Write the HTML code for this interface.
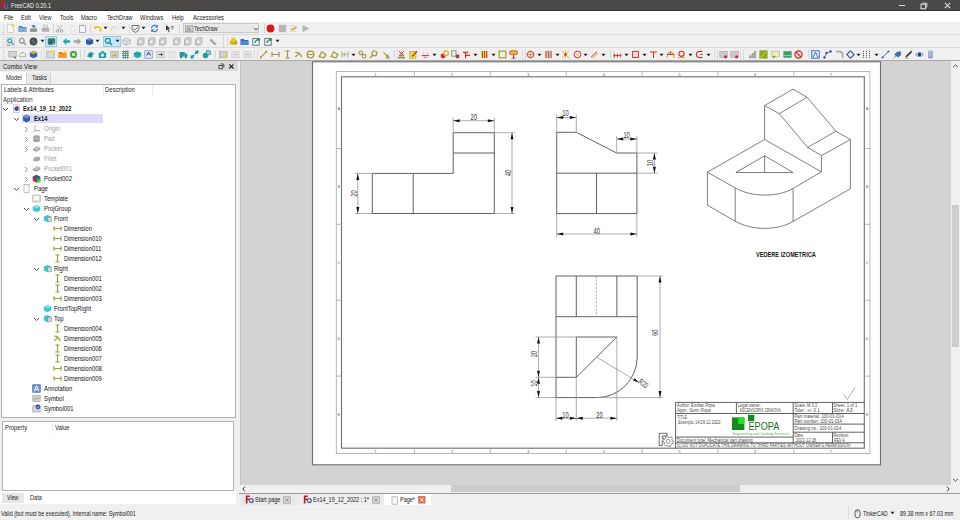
<!DOCTYPE html>
<html><head><meta charset="utf-8"><style>
*{box-sizing:border-box;margin:0;padding:0}
html,body{width:960px;height:520px;overflow:hidden;background:#f0f0f0;font-family:"Liberation Sans",sans-serif;color:#000}
.a{position:absolute}
.t{position:absolute;white-space:nowrap;transform-origin:0 50%}
svg{position:absolute;overflow:visible}
</style></head><body>
<div class="a" style="left:0px;top:0px;width:960px;height:11px;background:#4a4948;"></div>
<div class="a" style="left:0px;top:10px;width:960px;height:0.8px;background:#333232;"></div>
<svg style="left:0;top:0" width="12" height="11" viewBox="0 0 12 11"><path d="M1.3 1.5h4.5v1.6H3.1v1.4h2v1.5h-2v3.2H1.3z" fill="#d01818"/><circle cx="6.1" cy="6.6" r="1.8" fill="#2a3a6a" stroke="#4a70c0" stroke-width="1.1"/></svg>
<div class="t" style="left:11.4px;top:1.56px;font-size:7.4px;line-height:8.88px;color:#f0f0f0;font-weight:400;transform:scaleX(0.75);">FreeCAD 0.20.1</div>
<div class="a" style="left:899px;top:5px;width:6px;height:1px;background:#d8d8d8;"></div>
<svg style="left:920;top:2" width="8" height="8" viewBox="0 0 8 8"><rect x="1" y="2.2" width="4.6" height="4.6" fill="none" stroke="#d8d8d8" stroke-width="1.1"/><path d="M2.4 1.2h4.4v4.4" fill="none" stroke="#d8d8d8" stroke-width="1"/></svg>
<svg style="left:944;top:2" width="7" height="7" viewBox="0 0 7 7"><path d="M0.8 0.8l5.4 5.4M6.2 0.8L0.8 6.2" stroke="#e0e0e0" stroke-width="1.1"/></svg>
<div class="a" style="left:0px;top:11px;width:960px;height:11px;background:#ffffff;"></div>
<div class="t" style="left:4px;top:13.50px;font-size:7px;line-height:8.40px;color:#1a1a1a;font-weight:400;transform:scaleX(0.82);">File</div>
<div class="t" style="left:21px;top:13.50px;font-size:7px;line-height:8.40px;color:#1a1a1a;font-weight:400;transform:scaleX(0.82);">Edit</div>
<div class="t" style="left:39px;top:13.50px;font-size:7px;line-height:8.40px;color:#1a1a1a;font-weight:400;transform:scaleX(0.82);">View</div>
<div class="t" style="left:60px;top:13.50px;font-size:7px;line-height:8.40px;color:#1a1a1a;font-weight:400;transform:scaleX(0.82);">Tools</div>
<div class="t" style="left:81px;top:13.50px;font-size:7px;line-height:8.40px;color:#1a1a1a;font-weight:400;transform:scaleX(0.82);">Macro</div>
<div class="t" style="left:106.6px;top:13.50px;font-size:7px;line-height:8.40px;color:#1a1a1a;font-weight:400;transform:scaleX(0.82);">TechDraw</div>
<div class="t" style="left:140px;top:13.50px;font-size:7px;line-height:8.40px;color:#1a1a1a;font-weight:400;transform:scaleX(0.82);">Windows</div>
<div class="t" style="left:172.2px;top:13.50px;font-size:7px;line-height:8.40px;color:#1a1a1a;font-weight:400;transform:scaleX(0.82);">Help</div>
<div class="t" style="left:192.6px;top:13.50px;font-size:7px;line-height:8.40px;color:#1a1a1a;font-weight:400;transform:scaleX(0.82);">Accessories</div>
<div class="a" style="left:0px;top:22px;width:960px;height:39px;background:#f0f0f0;"></div>
<div class="a" style="left:0px;top:34px;width:960px;height:1px;background:#dcdcdc;"></div>
<div class="a" style="left:0px;top:47px;width:960px;height:1px;background:#dcdcdc;"></div>
<div class="a" style="left:0px;top:60px;width:960px;height:1px;background:#a9a9a9;"></div>
<div class="a" style="left:0px;top:61px;width:238px;height:444px;background:#f0f0f0;"></div>
<div class="a" style="left:0px;top:61px;width:238px;height:10px;background:#dadada;"></div>
<div class="t" style="left:2.5px;top:63.00px;font-size:7px;line-height:8.40px;color:#222;font-weight:400;transform:scaleX(0.86);">Combo View</div>
<svg style="left:217;top:62" width="20" height="9" viewBox="0 0 20 9"><rect x="2" y="3.4" width="3.4" height="3.4" fill="none" stroke="#333" stroke-width="0.8"/><path d="M3.4 2h3.4v3.4" fill="none" stroke="#333" stroke-width="0.8"/><path d="M12.3 2.3l4.2 4.2M16.5 2.3l-4.2 4.2" stroke="#222" stroke-width="1.1"/></svg>
<div class="a" style="left:0px;top:72px;width:26px;height:12px;background:#ffffff;"></div>
<div class="a" style="left:26px;top:73px;width:24px;height:11px;background:#eaeaea;"></div>
<div class="a" style="left:25.5px;top:73px;width:0.6px;height:11px;background:#d0d0d0;"></div>
<div class="a" style="left:49.5px;top:73px;width:0.6px;height:11px;background:#d0d0d0;"></div>
<div class="t" style="left:5.5px;top:73.72px;font-size:6.8px;line-height:8.16px;color:#222;font-weight:400;transform:scaleX(0.86);">Model</div>
<div class="t" style="left:32px;top:74.12px;font-size:6.8px;line-height:8.16px;color:#222;font-weight:400;transform:scaleX(0.86);">Tasks</div>
<div class="a" style="left:1px;top:83.5px;width:235px;height:334px;background:#ffffff;border:1px solid #b4b4b4"></div>
<div class="a" style="left:103px;top:85px;width:0.7px;height:10px;background:#ececec;"></div>
<div class="a" style="left:152px;top:85px;width:0.7px;height:10px;background:#ececec;"></div>
<div class="t" style="left:3.5px;top:85.70px;font-size:6.5px;line-height:7.80px;color:#222;font-weight:400;transform:scaleX(0.92);">Labels &amp; Attributes</div>
<div class="t" style="left:105px;top:85.70px;font-size:6.5px;line-height:7.80px;color:#222;font-weight:400;transform:scaleX(0.92);">Description</div>
<div class="a" style="left:2px;top:421px;width:232px;height:70px;background:#ffffff;border:1px solid #b4b4b4"></div>
<div class="a" style="left:52px;top:423px;width:0.7px;height:10px;background:#ececec;"></div>
<div class="t" style="left:4.6px;top:423.80px;font-size:6.5px;line-height:7.80px;color:#222;font-weight:400;transform:scaleX(0.9);">Property</div>
<div class="t" style="left:55px;top:423.80px;font-size:6.5px;line-height:7.80px;color:#222;font-weight:400;transform:scaleX(0.9);">Value</div>
<div class="a" style="left:0px;top:491px;width:236px;height:13px;background:#ffffff;"></div>
<div class="a" style="left:2px;top:492.8px;width:21.5px;height:10.4px;background:#e6e6e6;"></div>
<div class="t" style="left:6.9px;top:494.30px;font-size:6.5px;line-height:7.80px;color:#222;font-weight:400;transform:scaleX(0.82);">View</div>
<div class="t" style="left:29.5px;top:494.30px;font-size:6.5px;line-height:7.80px;color:#222;font-weight:400;transform:scaleX(0.86);">Data</div>
<div class="a" style="left:239px;top:61px;width:721px;height:432px;background:#f0f0f0;"></div>
<div class="a" style="left:239.5px;top:61px;width:711.5px;height:424px;background:#d3d3d3;"></div>
<div class="a" style="left:239.5px;top:61px;width:1px;height:424px;background:#c4c4c4;"></div>
<div class="a" style="left:951px;top:61px;width:9px;height:424px;background:#f0f0f0;"></div>
<div class="a" style="left:951.8px;top:204.7px;width:7px;height:142.2px;background:#cdcdcd;"></div>
<svg style="left:951;top:63" width="9" height="6" viewBox="0 0 9 6"><path d="M2 4.2l2.5-2.4 2.5 2.4" fill="none" stroke="#555" stroke-width="1"/></svg>
<svg style="left:951;top:477" width="9" height="6" viewBox="0 0 9 6"><path d="M2 1.8l2.5 2.4 2.5-2.4" fill="none" stroke="#555" stroke-width="1"/></svg>
<div class="a" style="left:239.5px;top:485px;width:711.5px;height:8px;background:#f0f0f0;"></div>
<div class="a" style="left:450.6px;top:484.8px;width:289.8px;height:7.4px;background:#cdcdcd;"></div>
<svg style="left:241;top:485" width="6" height="8" viewBox="0 0 6 8"><path d="M4 1.6l-2.2 2.4 2.2 2.4" fill="none" stroke="#333" stroke-width="1"/></svg>
<svg style="left:945;top:485" width="6" height="8" viewBox="0 0 6 8"><path d="M2 1.6l2.2 2.4-2.2 2.4" fill="none" stroke="#333" stroke-width="1"/></svg>
<div class="a" style="left:239px;top:492.8px;width:721px;height:0.8px;background:#9a9a9a;"></div>
<div class="a" style="left:240.7px;top:493.5px;width:55.3px;height:11px;background:#e8e8e8;"></div>
<div class="a" style="left:296px;top:493.5px;width:88px;height:11px;background:#ececec;"></div>
<div class="a" style="left:384px;top:493.5px;width:47px;height:11.5px;background:#ffffff;"></div>
<svg style="left:244.5px;top:495px" width="10" height="9" viewBox="0 0 10 9"><path d="M0.8 0.6h4v1.5H2.5v1.4h1.9v1.4H2.5v3.5H0.8z" fill="#c81a1a"/><circle cx="6.3" cy="5.6" r="2" fill="none" stroke="#3c64b4" stroke-width="1.2"/></svg>
<div class="t" style="left:255px;top:496.16px;font-size:6.4px;line-height:7.68px;color:#222;font-weight:400;transform:scaleX(0.86);">Start page</div>
<svg style="left:283;top:496" width="8" height="8" viewBox="0 0 8 8"><rect x="0.7" y="0.7" width="6.6" height="6.6" fill="#d6d6d6" stroke="#a8a8a8" stroke-width="0.8"/><path d="M2.4 2.4l3.2 3.2M5.6 2.4l-3.2 3.2" stroke="#888" stroke-width="0.8"/></svg>
<svg style="left:302.5px;top:495px" width="10" height="9" viewBox="0 0 10 9"><path d="M0.8 0.6h4v1.5H2.5v1.4h1.9v1.4H2.5v3.5H0.8z" fill="#c81a1a"/><circle cx="6.3" cy="5.6" r="2" fill="none" stroke="#3c64b4" stroke-width="1.2"/></svg>
<div class="t" style="left:312.6px;top:496.16px;font-size:6.4px;line-height:7.68px;color:#222;font-weight:400;transform:scaleX(0.86);">Ex14_19_12_2022 : 1*</div>
<svg style="left:371.5;top:496" width="8" height="8" viewBox="0 0 8 8"><rect x="0.7" y="0.7" width="6.6" height="6.6" fill="#d6d6d6" stroke="#a8a8a8" stroke-width="0.8"/><path d="M2.4 2.4l3.2 3.2M5.6 2.4l-3.2 3.2" stroke="#888" stroke-width="0.8"/></svg>
<svg style="left:391;top:495.5" width="8" height="9" viewBox="0 0 8 9"><rect x="1" y="0.8" width="5.5" height="7.4" fill="#f8f8f8" stroke="#b0b0b0" stroke-width="0.8"/></svg>
<div class="t" style="left:400px;top:496.36px;font-size:6.4px;line-height:7.68px;color:#222;font-weight:400;transform:scaleX(0.86);">Page*</div>
<svg style="left:418;top:496" width="8" height="8" viewBox="0 0 8 8"><rect x="0.5" y="0.5" width="6.6" height="6.6" fill="#e27458" stroke="#c85a3a" stroke-width="0.6"/><path d="M2.2 2.2l3.2 3.2M5.4 2.2l-3.2 3.2" stroke="#fff" stroke-width="0.9"/></svg>
<div class="a" style="left:0px;top:504.5px;width:960px;height:15.5px;background:#f0f0f0;"></div>
<div class="t" style="left:1px;top:509.62px;font-size:6.3px;line-height:7.56px;color:#222;font-weight:400;transform:scaleX(0.86);">Valid (but must be executed), Internal name: Symbol001</div>
<div class="a" style="left:847.5px;top:506px;width:0.6px;height:13px;background:#dcdcdc;"></div>
<svg style="left:854;top:508.5" width="7" height="10" viewBox="0 0 7 10"><rect x="1" y="0.8" width="5" height="8" rx="2.4" fill="none" stroke="#444" stroke-width="0.9"/><path d="M3 1v2.4" stroke="#444" stroke-width="0.7"/></svg>
<div class="t" style="left:862.6px;top:509.56px;font-size:6.4px;line-height:7.68px;color:#222;font-weight:400;transform:scaleX(0.8);">TinkerCAD</div>
<svg style="left:889.5;top:511" width="5" height="4" viewBox="0 0 5 4"><path d="M0.5 0.8h4l-2 2.4z" fill="#222"/></svg>
<div class="t" style="left:899.7px;top:509.56px;font-size:6.4px;line-height:7.68px;color:#222;font-weight:400;transform:scaleX(0.84);">89.38 mm x 67.03 mm</div>
<div class="a" style="left:2.5px;top:24px;width:1px;height:9px;background:repeating-linear-gradient(#c4c4c4 0 1px,transparent 1px 2px)"></div><svg style="left:6.30px;top:23.90px" width="9" height="9" viewBox="0 0 9 9"><rect x="1.2" y="0.8" width="6.4" height="7.6" fill="#f6f6f6" stroke="#bbb" stroke-width="0.6"/><circle cx="7" cy="1.6" r="1.6" fill="#f5e030"/></svg><svg style="left:17.50px;top:23.90px" width="9" height="9" viewBox="0 0 9 9"><path d="M0.6 2h3l1 1h3.8v5H0.6z" fill="#4f88c8"/><path d="M0.6 4h7.8v4H0.6z" fill="#7aaee0"/></svg><svg style="left:29.20px;top:23.90px" width="9" height="9" viewBox="0 0 9 9"><path d="M1 5h7v3H1z" fill="#999"/><path d="M2.5 1h3l1.6 2.4H4.6V5" fill="#4f88c8"/><path d="M1 5h7" stroke="#666" stroke-width="0.6"/></svg><svg style="left:40.50px;top:23.90px" width="9" height="9" viewBox="0 0 9 9"><rect x="0.8" y="4" width="7.4" height="3.8" fill="#b4b4b4"/><rect x="2.4" y="1" width="4.2" height="3" fill="#e6e6e6" stroke="#aaa" stroke-width="0.5"/></svg><div class="a" style="left:52.5px;top:24px;width:0.8px;height:9px;background:#d8d8d8"></div><svg style="left:55.00px;top:23.90px" width="9" height="9" viewBox="0 0 9 9"><path d="M2 1l4 5M7 1L3 6" stroke="#aaa" stroke-width="0.8"/><circle cx="2.4" cy="7" r="1.3" fill="none" stroke="#888" stroke-width="0.7"/><circle cx="6.6" cy="7" r="1.3" fill="none" stroke="#888" stroke-width="0.7"/></svg><svg style="left:67.50px;top:23.90px" width="9" height="9" viewBox="0 0 9 9"><rect x="3" y="2" width="4" height="6" fill="none" stroke="#ddd" stroke-width="0.6"/></svg><svg style="left:78.00px;top:23.90px" width="9" height="9" viewBox="0 0 9 9"><rect x="1.5" y="1.4" width="6" height="7" fill="#f6f6f6" stroke="#9a9a9a" stroke-width="0.7"/><rect x="3" y="0.6" width="3" height="1.6" fill="#bbb"/></svg><div class="a" style="left:89.5px;top:24px;width:0.8px;height:9px;background:#d8d8d8"></div><svg style="left:92.50px;top:23.90px" width="9" height="9" viewBox="0 0 9 9"><path d="M2 4.5Q4.5 1.5 7.5 4.2V7.5" fill="none" stroke="#e8c020" stroke-width="1.8"/><path d="M0.8 2.5L3.6 2.4L2.2 5.6z" fill="#e8c020"/></svg><svg style="left:103.00px;top:26.40px" width="5" height="4" viewBox="0 0 5 4"><path d="M0.5 0.8h4L2.5 3.2z" fill="#222"/></svg><svg style="left:109.50px;top:23.90px" width="9" height="9" viewBox="0 0 9 9"><path d="M7 4.5Q4.5 1.5 1.5 4.2V7.5" fill="none" stroke="#ddd" stroke-width="1.6"/></svg><svg style="left:120.50px;top:26.40px" width="5" height="4" viewBox="0 0 5 4"><path d="M0.5 0.8h4L2.5 3.2z" fill="#222"/></svg><div class="a" style="left:128.5px;top:24px;width:0.8px;height:9px;background:#d8d8d8"></div><svg style="left:130.50px;top:23.90px" width="9" height="9" viewBox="0 0 9 9"><path d="M1 1.5h7v3Q8 7.5 4.5 8.4Q1 7.5 1 4.5z" fill="#eee" stroke="#555" stroke-width="0.8"/><path d="M2.8 4.6l1.4 1.3 2.4-2.6" stroke="#555" stroke-width="0.8" fill="none"/></svg><svg style="left:141.00px;top:26.40px" width="5" height="4" viewBox="0 0 5 4"><path d="M0.5 0.8h4L2.5 3.2z" fill="#222"/></svg><svg style="left:150.00px;top:23.90px" width="9" height="9" viewBox="0 0 9 9"><path d="M1.5 4.2A3.1 3.1 0 0 1 7.2 2.8M7.5 4.8A3.1 3.1 0 0 1 1.8 6.2" fill="none" stroke="#3478d0" stroke-width="1.3"/><path d="M7.8 0.8V3.6H5z M1.2 8.2V5.4H4z" fill="#3478d0"/></svg><svg style="left:165.00px;top:23.90px" width="9" height="9" viewBox="0 0 9 9"><path d="M1 1L5 4.6L3.4 5L4.6 8L3.8 8.3L2.6 5.4L1 6.6z" fill="#333"/><text x="7" y="5.6" font-size="6" font-weight="700" text-anchor="middle" fill="#555" font-family="Liberation Sans">?</text></svg><div class="a" style="left:178.5px;top:24px;width:1px;height:9px;background:repeating-linear-gradient(#c4c4c4 0 1px,transparent 1px 2px)"></div><div class="a" style="left:182.5px;top:23.3px;width:76.7px;height:10.2px;background:#e8e8e8;border:0.8px solid #c8c8c8"></div><svg style="left:184.50px;top:24.60px" width="9" height="8" viewBox="0 0 9 8"><rect x="0.6" y="0.8" width="7.4" height="6" fill="#cfcfcf" stroke="#888" stroke-width="0.6"/><path d="M2 5h4M2 3h3" stroke="#555" stroke-width="0.6"/></svg><div class="t" style="left:193.7px;top:25.2px;font-size:7px;line-height:8.4px;color:#222;transform:scaleX(0.76);transform-origin:0 50%">TechDraw</div><svg style="left:253.00px;top:26.50px" width="6" height="4" viewBox="0 0 6 4"><path d="M0.8 0.8l2.2 2.2 2.2-2.2" fill="none" stroke="#444" stroke-width="0.9"/></svg><div class="a" style="left:263.5px;top:24px;width:1px;height:9px;background:repeating-linear-gradient(#c4c4c4 0 1px,transparent 1px 2px)"></div><svg style="left:265.80px;top:23.90px" width="9" height="9" viewBox="0 0 9 9"><circle cx="4.5" cy="4.5" r="3.9" fill="#d81818"/></svg><svg style="left:277.50px;top:23.90px" width="9" height="9" viewBox="0 0 9 9"><rect x="0.8" y="0.8" width="7.4" height="7.4" fill="#b6b6b6"/></svg><svg style="left:289.00px;top:23.90px" width="9" height="9" viewBox="0 0 9 9"><path d="M1 2h6.5M1 4.5h6.5M1 7h6.5" stroke="#d8c890" stroke-width="0.8"/><path d="M2.4 6.2L7.6 3" stroke="#b08030" stroke-width="1"/></svg><svg style="left:300.50px;top:23.90px" width="9" height="9" viewBox="0 0 9 9"><path d="M1.5 0.8L8.3 4.5L1.5 8.2z" fill="#b6b6b6"/></svg><div class="a" style="left:2.5px;top:37px;width:1px;height:9px;background:repeating-linear-gradient(#c4c4c4 0 1px,transparent 1px 2px)"></div><svg style="left:6.30px;top:36.80px" width="9" height="9" viewBox="0 0 9 9"><rect x="0.8" y="0.8" width="7.4" height="7.4" fill="#f2f2f2" stroke="#aaa" stroke-width="0.5"/><circle cx="3.8" cy="3.8" r="2" fill="none" stroke="#1aa0a8" stroke-width="1.2"/><path d="M5.2 5.2L7.6 7.6" stroke="#1aa0a8" stroke-width="1.3"/><path d="M0.8 8.2H4" stroke="#c04040" stroke-width="0.7"/></svg><svg style="left:17.50px;top:36.80px" width="9" height="9" viewBox="0 0 9 9"><circle cx="3.8" cy="3.8" r="2.4" fill="none" stroke="#999" stroke-width="1.3"/><path d="M5.4 5.4L8 8" stroke="#999" stroke-width="1.5"/></svg><svg style="left:29.00px;top:36.80px" width="9" height="9" viewBox="0 0 9 9"><circle cx="4.5" cy="4.5" r="3.9" fill="#2a5a5a"/><circle cx="4.5" cy="4.5" r="1.9" fill="none" stroke="#d03030" stroke-width="0.9"/><path d="M2.5 2.5l4 4" stroke="#30c0c0" stroke-width="0.8"/></svg><svg style="left:39.50px;top:39.30px" width="5" height="4" viewBox="0 0 5 4"><path d="M0.5 0.8h4L2.5 3.2z" fill="#222"/></svg><div class="a" style="left:45px;top:35.6px;width:12.2px;height:11.2px;background:#cce4f7;border:0.8px solid #99c8f0"></div><svg style="left:46.50px;top:36.80px" width="9" height="9" viewBox="0 0 9 9"><rect x="0.8" y="1.2" width="7.4" height="6.6" rx="1.2" fill="#2e8a4a"/><circle cx="4" cy="5.2" r="2" fill="#2c50b0"/><path d="M5.8 6.2l2 1.6" stroke="#fff" stroke-width="1"/></svg><svg style="left:61.50px;top:36.80px" width="9" height="9" viewBox="0 0 9 9"><path d="M0.8 4.5L4.4 1v2.2H8.2v2.6H4.4V8z" fill="#18a8b0"/></svg><svg style="left:72.50px;top:36.80px" width="9" height="9" viewBox="0 0 9 9"><path d="M8.2 4.5L4.6 1v2.2H0.8v2.6h3.8V8z" fill="#a6a6a6"/></svg><svg style="left:84.50px;top:36.80px" width="9" height="9" viewBox="0 0 9 9"><path d="M1 2.6L4.6 1.2L8.2 2.4V6.6L4.6 8L1 6.8z" fill="#2c5aa8"/><path d="M1 2.6L4.6 1.2L8.2 2.4L4.6 3.8z" fill="#6a96d8"/><path d="M0.6 6l2 0.6v2" fill="#1a9aa0"/></svg><svg style="left:95.00px;top:39.30px" width="5" height="4" viewBox="0 0 5 4"><path d="M0.5 0.8h4L2.5 3.2z" fill="#222"/></svg><div class="a" style="left:102.8px;top:35.6px;width:18.6px;height:11.2px;background:#cce4f7;border:0.8px solid #99c8f0"></div><svg style="left:104.30px;top:36.80px" width="9" height="9" viewBox="0 0 9 9"><circle cx="3.8" cy="3.8" r="2.4" fill="none" stroke="#159aa0" stroke-width="1.4"/><path d="M5.4 5.4L8 8" stroke="#159aa0" stroke-width="1.6"/></svg><svg style="left:115.00px;top:39.30px" width="5" height="4" viewBox="0 0 5 4"><path d="M0.5 0.8h4L2.5 3.2z" fill="#222"/></svg><svg style="left:122.00px;top:36.80px" width="9" height="9" viewBox="0 0 9 9"><path d="M4.5 0.8L8.2 2.8V6.4L4.5 8.2L0.8 6.4V2.8z" fill="#e4e4e4" stroke="#a8a8a8" stroke-width="0.7"/><path d="M0.8 2.8L4.5 4.6L8.2 2.8M4.5 4.6V8.2" stroke="#a8a8a8" stroke-width="0.6" fill="none"/></svg><svg style="left:135.50px;top:36.80px" width="9" height="9" viewBox="0 0 9 9"><path d="M1.5 2.4L3 0.9H8V6.6L6.5 8.1H1.5z" fill="#d8d8d8" stroke="#a4a4a4" stroke-width="0.7"/><rect x="2.4" y="3" width="3.6" height="3.6" fill="#f2f2f2" stroke="#a4a4a4" stroke-width="0.5"/></svg><svg style="left:146.50px;top:36.80px" width="9" height="9" viewBox="0 0 9 9"><path d="M1.5 2.4L3 0.9H8V6.6L6.5 8.1H1.5z" fill="#d8d8d8" stroke="#a4a4a4" stroke-width="0.7"/><rect x="2.4" y="3" width="3.6" height="3.6" fill="#f2f2f2" stroke="#a4a4a4" stroke-width="0.5"/></svg><svg style="left:157.50px;top:36.80px" width="9" height="9" viewBox="0 0 9 9"><path d="M1.5 2.4L3 0.9H8V6.6L6.5 8.1H1.5z" fill="#d8d8d8" stroke="#a4a4a4" stroke-width="0.7"/><rect x="2.4" y="3" width="3.6" height="3.6" fill="#f2f2f2" stroke="#a4a4a4" stroke-width="0.5"/></svg><svg style="left:171.50px;top:36.80px" width="9" height="9" viewBox="0 0 9 9"><path d="M1.5 2.4L3 0.9H8V6.6L6.5 8.1H1.5z" fill="#d8d8d8" stroke="#a4a4a4" stroke-width="0.7"/><rect x="2.4" y="3" width="3.6" height="3.6" fill="#f2f2f2" stroke="#a4a4a4" stroke-width="0.5"/></svg><svg style="left:182.50px;top:36.80px" width="9" height="9" viewBox="0 0 9 9"><path d="M1.5 2.4L3 0.9H8V6.6L6.5 8.1H1.5z" fill="#d8d8d8" stroke="#a4a4a4" stroke-width="0.7"/><rect x="2.4" y="3" width="3.6" height="3.6" fill="#f2f2f2" stroke="#a4a4a4" stroke-width="0.5"/></svg><svg style="left:193.50px;top:36.80px" width="9" height="9" viewBox="0 0 9 9"><path d="M1.5 2.4L3 0.9H8V6.6L6.5 8.1H1.5z" fill="#d8d8d8" stroke="#a4a4a4" stroke-width="0.7"/><rect x="2.4" y="3" width="3.6" height="3.6" fill="#f2f2f2" stroke="#a4a4a4" stroke-width="0.5"/></svg><svg style="left:208.50px;top:36.80px" width="9" height="9" viewBox="0 0 9 9"><path d="M1.5 2.5L6.5 7.5" stroke="#a0a0a0" stroke-width="2.4"/><path d="M2.6 3.6l0.8-0.8M4 5l0.8-0.8M5.4 6.4l0.8-0.8" stroke="#eee" stroke-width="0.5"/></svg><div class="a" style="left:222.6px;top:35px;width:0.8px;height:12px;background:#d8d8d8"></div><div class="a" style="left:226.5px;top:37px;width:1px;height:9px;background:repeating-linear-gradient(#c4c4c4 0 1px,transparent 1px 2px)"></div><svg style="left:228.50px;top:36.80px" width="9" height="9" viewBox="0 0 9 9"><circle cx="3" cy="5.5" r="2.4" fill="#d8b820"/><circle cx="6" cy="5.5" r="2.4" fill="#c8a818"/><circle cx="4.5" cy="3" r="2.4" fill="#e8c830"/></svg><svg style="left:240.00px;top:36.80px" width="9" height="9" viewBox="0 0 9 9"><path d="M0.6 2h3l1 1h3.8v5H0.6z" fill="#2e6ab8"/><path d="M0.6 4h7.8v4H0.6z" fill="#4c8ad8"/></svg><svg style="left:251.50px;top:36.80px" width="9" height="9" viewBox="0 0 9 9"><rect x="0.8" y="1.6" width="6.4" height="6.6" fill="#f4f4f4" stroke="#3a5a8a" stroke-width="0.8"/><path d="M3 6Q3.4 3 7 2.4" stroke="#1a9a40" stroke-width="1.4" fill="none"/><path d="M5.6 0.8L8.4 2.2L6.2 4.2z" fill="#1a9a40"/></svg><svg style="left:263.50px;top:36.80px" width="9" height="9" viewBox="0 0 9 9"><rect x="0.8" y="1.6" width="6.4" height="6.6" fill="#f4f4f4" stroke="#3a5a8a" stroke-width="0.8"/><path d="M3 6Q3.4 3 7 2.4" stroke="#1a9a40" stroke-width="1.4" fill="none"/><path d="M5.6 0.8L8.4 2.2L6.2 4.2z" fill="#1a9a40"/></svg><svg style="left:274.50px;top:39.30px" width="5" height="4" viewBox="0 0 5 4"><path d="M0.5 0.8h4L2.5 3.2z" fill="#222"/></svg><div class="a" style="left:2.5px;top:50px;width:1px;height:9px;background:repeating-linear-gradient(#c4c4c4 0 1px,transparent 1px 2px)"></div><svg style="left:7.50px;top:50.10px" width="9" height="9" viewBox="0 0 9 9"><rect x="0.8" y="1.5" width="7.4" height="5.6" fill="#d6d6d6" stroke="#999" stroke-width="0.6"/><path d="M5.8 6.4L8 8.4" stroke="#333" stroke-width="1"/></svg><svg style="left:18.00px;top:50.10px" width="9" height="9" viewBox="0 0 9 9"><path d="M1.4 6.8Q0.4 4.8 2.6 4.2Q3 1.6 5.6 2.6Q8.4 2.8 7.8 6.6z" fill="#eee" stroke="#999" stroke-width="0.7"/></svg><svg style="left:29.00px;top:50.10px" width="9" height="9" viewBox="0 0 9 9"><path d="M0.8 2.6L4.5 1L8.2 2.6V6.6L4.5 8.2L0.8 6.6z" fill="#3a60b0"/><path d="M0.8 2.6L4.5 1L8.2 2.6L4.5 4.2z" fill="#e0b020"/></svg><div class="a" style="left:40.5px;top:50px;width:0.8px;height:9px;background:#d8d8d8"></div><div class="a" style="left:43.5px;top:50px;width:1px;height:9px;background:repeating-linear-gradient(#c4c4c4 0 1px,transparent 1px 2px)"></div><svg style="left:46.00px;top:50.10px" width="9" height="9" viewBox="0 0 9 9"><rect x="0.8" y="1.2" width="7.4" height="6.8" fill="#d8d8d8" stroke="#999" stroke-width="0.6"/><circle cx="7" cy="2" r="1.8" fill="#f0e040"/></svg><svg style="left:57.50px;top:50.10px" width="9" height="9" viewBox="0 0 9 9"><path d="M0.6 2h3l1 1h3.8v5H0.6z" fill="#e87810"/><path d="M0.6 4h7.8v4H0.6z" fill="#f89a30"/><circle cx="7" cy="1.8" r="1.5" fill="#f0e040"/></svg><svg style="left:69.00px;top:50.10px" width="9" height="9" viewBox="0 0 9 9"><rect x="0.8" y="0.8" width="7.4" height="7.4" fill="#dcdcdc"/><circle cx="4.5" cy="4.5" r="2.6" fill="none" stroke="#3aa030" stroke-width="1.6"/></svg><div class="a" style="left:80px;top:50px;width:0.8px;height:9px;background:#d8d8d8"></div><div class="a" style="left:83.7px;top:50px;width:1px;height:9px;background:repeating-linear-gradient(#c4c4c4 0 1px,transparent 1px 2px)"></div><svg style="left:85.90px;top:50.10px" width="9" height="9" viewBox="0 0 9 9"><path d="M1 6.5L4 2L8 3L5 8z" fill="#18a0a8"/><path d="M2.6 3.6L6.6 6.4" stroke="#2060b0" stroke-width="1"/></svg><svg style="left:98.20px;top:50.10px" width="9" height="9" viewBox="0 0 9 9"><rect x="0.8" y="2.4" width="7.4" height="5.6" rx="1" fill="#18a0a8"/><circle cx="4.5" cy="5.2" r="1.6" fill="#e8f8f8"/><rect x="3" y="1.2" width="3" height="1.4" fill="#18a0a8"/></svg><svg style="left:109.90px;top:50.10px" width="9" height="9" viewBox="0 0 9 9"><rect x="0.8" y="1.4" width="7.4" height="6.4" fill="#cfcfcf" stroke="#a0a0a0" stroke-width="0.5"/><path d="M2.2 5.6h3.6V3.4" stroke="#d0b020" stroke-width="1.2" fill="none"/></svg><svg style="left:120.70px;top:50.10px" width="9" height="9" viewBox="0 0 9 9"><path d="M1 1.5h7M1 3.5h7M1 5.5h7M1 7.5h7" stroke="#8a7050" stroke-width="0.9"/><path d="M2.5 0.5v8M4.5 0.5v8M6.5 0.5v8" stroke="#20a0a0" stroke-width="0.8"/></svg><svg style="left:132.80px;top:50.10px" width="9" height="9" viewBox="0 0 9 9"><path d="M0.8 3L4.5 1.2L8.2 3V6.4L4.5 8.2L0.8 6.4z" fill="#18b0b8"/><path d="M0.8 3L4.5 4.6L8.2 3" stroke="#0a7a80" stroke-width="0.5" fill="none"/></svg><svg style="left:143.80px;top:50.10px" width="9" height="9" viewBox="0 0 9 9"><rect x="0.8" y="0.8" width="7.4" height="7.4" fill="#e0e6f0" stroke="#6a80a8" stroke-width="0.6"/><path d="M2.5 5.5L4.5 2.5L6.5 5.5" stroke="#2a56b0" stroke-width="1.1" fill="none"/></svg><svg style="left:155.70px;top:50.10px" width="9" height="9" viewBox="0 0 9 9"><rect x="0.8" y="1.2" width="7.4" height="6.6" fill="#e2e2e2" stroke="#a6a6a6" stroke-width="0.5"/><path d="M2.5 4.5h4M5 3l1.5 1.5L5 6" stroke="#333" stroke-width="0.8" fill="none"/></svg><svg style="left:166.50px;top:50.10px" width="9" height="9" viewBox="0 0 9 9"><rect x="1" y="1.2" width="7" height="6.6" fill="#e8e8e8" stroke="#cfcfcf" stroke-width="0.5"/></svg><svg style="left:178.80px;top:50.10px" width="9" height="9" viewBox="0 0 9 9"><rect x="0.6" y="2" width="5.2" height="4.6" fill="#18a0a8"/><path d="M5.8 3.5h2.2l0.6 1.5v1.6H5.8z" fill="#18a0a8"/><circle cx="2.2" cy="7.3" r="1" fill="#0a6a70"/><circle cx="6.8" cy="7.3" r="1" fill="#0a6a70"/></svg><svg style="left:190.30px;top:50.10px" width="9" height="9" viewBox="0 0 9 9"><path d="M1 8L4 5M5 4L8 1" stroke="#2a7ad0" stroke-width="1.6"/><rect x="0.6" y="5.4" width="3" height="3" fill="#18a0a8"/><rect x="5.4" y="0.6" width="3" height="3" fill="#18a0a8"/></svg><svg style="left:202.40px;top:50.10px" width="9" height="9" viewBox="0 0 9 9"><circle cx="3.5" cy="5.5" r="2.8" fill="#18a0a8"/><rect x="4.4" y="0.8" width="4" height="4" fill="#7ad0d8" stroke="#0a7a80" stroke-width="0.5"/></svg><div class="a" style="left:215.4px;top:50px;width:0.8px;height:9px;background:#d8d8d8"></div><div class="a" style="left:219px;top:50px;width:1px;height:9px;background:repeating-linear-gradient(#c4c4c4 0 1px,transparent 1px 2px)"></div><svg style="left:219.30px;top:50.10px" width="9" height="9" viewBox="0 0 9 9"><rect x="0.8" y="1.4" width="7.4" height="6.4" fill="#cfcfcf" stroke="#999" stroke-width="0.5"/><circle cx="6.8" cy="6.6" r="1.6" fill="#f0d020"/></svg><svg style="left:230.90px;top:50.10px" width="9" height="9" viewBox="0 0 9 9"><rect x="0.8" y="1.4" width="7.4" height="6.4" fill="#e0e0e0" stroke="#c8c8c8" stroke-width="0.5"/><path d="M2.4 4.5h4" stroke="#bbb" stroke-width="0.8"/></svg><svg style="left:242.60px;top:50.10px" width="9" height="9" viewBox="0 0 9 9"><rect x="0.8" y="1.4" width="7.4" height="6.4" fill="#e0e0e0" stroke="#c8c8c8" stroke-width="0.5"/><path d="M2.4 4.5h4" stroke="#bbb" stroke-width="0.8"/></svg><div class="a" style="left:253.5px;top:50px;width:0.8px;height:9px;background:#d8d8d8"></div><div class="a" style="left:256.5px;top:50px;width:1px;height:9px;background:repeating-linear-gradient(#c4c4c4 0 1px,transparent 1px 2px)"></div><svg style="left:258.80px;top:50.10px" width="9" height="9" viewBox="0 0 9 9"><path d="M1.4 7.6L7.6 1.4" stroke="#a5982e" stroke-width="1.3"/><circle cx="1.6" cy="7.4" r="1" fill="#a5982e"/><circle cx="7.4" cy="1.6" r="1" fill="#a5982e"/></svg><svg style="left:270.50px;top:50.10px" width="9" height="9" viewBox="0 0 9 9"><path d="M1 2V7M8 2V7M1 4.5H8" stroke="#a5982e" stroke-width="1.2" fill="none"/></svg><svg style="left:282.50px;top:50.10px" width="9" height="9" viewBox="0 0 9 9"><path d="M2.2 1H6.8M2.2 8H6.8M4.5 1V8" stroke="#a5982e" stroke-width="1.2" fill="none"/></svg><svg style="left:294.00px;top:50.10px" width="9" height="9" viewBox="0 0 9 9"><path d="M1.2 2.4Q5.6 1.6 7.8 7.4M1.4 7L4.6 3.6" stroke="#a5982e" stroke-width="1.2" fill="none"/></svg><svg style="left:306.30px;top:50.10px" width="9" height="9" viewBox="0 0 9 9"><circle cx="4.5" cy="4.5" r="3.4" fill="none" stroke="#a5982e" stroke-width="1.2"/><path d="M1.5 4.5H7.5" stroke="#a5982e" stroke-width="1.1"/></svg><svg style="left:317.70px;top:50.10px" width="9" height="9" viewBox="0 0 9 9"><path d="M1.2 6.6L3.8 1.8L7.8 4.4L6 7.8z" fill="none" stroke="#a5982e" stroke-width="1.2"/></svg><svg style="left:329.50px;top:50.10px" width="9" height="9" viewBox="0 0 9 9"><path d="M1.2 6.6L3.8 1.8L7.8 4.4L6 7.8z" fill="none" stroke="#a5982e" stroke-width="1.2"/></svg><svg style="left:340.50px;top:50.10px" width="9" height="9" viewBox="0 0 9 9"><path d="M1 1.5V7.5M7 1.5V7.5M1 4.5H7M3.5 2.6V6.4" stroke="#b4b8a0" stroke-width="1.2" fill="none"/></svg><svg style="left:351.00px;top:52.60px" width="5" height="4" viewBox="0 0 5 4"><path d="M0.5 0.8h4L2.5 3.2z" fill="#222"/></svg><svg style="left:357.50px;top:50.10px" width="9" height="9" viewBox="0 0 9 9"><circle cx="2.8" cy="2.8" r="1.8" fill="none" stroke="#a5982e" stroke-width="1.1"/><circle cx="6.2" cy="6.2" r="1.8" fill="none" stroke="#a5982e" stroke-width="1.1"/><path d="M3.8 3.8L5.2 5.2" stroke="#a5982e" stroke-width="1.1"/></svg><svg style="left:369.30px;top:50.10px" width="9" height="9" viewBox="0 0 9 9"><circle cx="5.4" cy="3.4" r="2.4" fill="none" stroke="#a5982e" stroke-width="1.2"/><path d="M3.6 5.2L1 8" stroke="#a5982e" stroke-width="1.3"/></svg><svg style="left:381.50px;top:50.10px" width="9" height="9" viewBox="0 0 9 9"><path d="M1.5 2L5 6.5M4 8H8" stroke="#a5982e" stroke-width="1.1" fill="none"/><path d="M5.6 3.8L7.4 7.6H3.8z" fill="#a5982e"/></svg><div class="a" style="left:393.5px;top:50px;width:0.8px;height:9px;background:#d8d8d8"></div><div class="a" style="left:396.5px;top:50px;width:1px;height:9px;background:repeating-linear-gradient(#c4c4c4 0 1px,transparent 1px 2px)"></div><svg style="left:397.00px;top:50.10px" width="9" height="9" viewBox="0 0 9 9"><path d="M1 7.8h7" stroke="#3a9a3a" stroke-width="1.2"/><path d="M1.6 6.6Q4.5 3 7.4 6.6z" fill="#e07030"/><path d="M2 1.2L7 5.6M7 1.2L2 5.6" stroke="#d03020" stroke-width="1"/></svg><svg style="left:408.50px;top:50.10px" width="9" height="9" viewBox="0 0 9 9"><rect x="0.8" y="1.4" width="6.2" height="6.8" fill="#f0e020" stroke="#888" stroke-width="0.5"/><path d="M3 6.5L8.2 1.2" stroke="#d02020" stroke-width="1.2"/></svg><svg style="left:420.50px;top:50.10px" width="9" height="9" viewBox="0 0 9 9"><path d="M0.8 5.6H8.2" stroke="#d42a2a" stroke-width="1"/><path d="M2.6 2.4V3.8M6.4 2.4V3.8" stroke="#e0b020" stroke-width="1"/><path d="M2.8 7.4h3.4" stroke="#d42a2a" stroke-width="0.6"/></svg><svg style="left:432.00px;top:52.60px" width="5" height="4" viewBox="0 0 5 4"><path d="M0.5 0.8h4L2.5 3.2z" fill="#222"/></svg><svg style="left:439.50px;top:50.10px" width="9" height="9" viewBox="0 0 9 9"><circle cx="3" cy="6" r="2.4" fill="#d42a2a"/><circle cx="6" cy="3.2" r="2.4" fill="none" stroke="#d8b020" stroke-width="1.2"/></svg><svg style="left:450.50px;top:50.10px" width="9" height="9" viewBox="0 0 9 9"><rect x="0.8" y="0.8" width="4.2" height="5.4" fill="none" stroke="#777" stroke-width="0.8"/><rect x="4.8" y="4.6" width="3.4" height="3.6" fill="#d42a2a"/></svg><svg style="left:461.50px;top:50.10px" width="9" height="9" viewBox="0 0 9 9"><path d="M1 2.4H6M3.5 2.4V8.2M3.5 5.4H8" stroke="#d42a2a" stroke-width="1.1"/><path d="M6 0.8V4" stroke="#d8b020" stroke-width="0.8"/></svg><svg style="left:473.00px;top:52.60px" width="5" height="4" viewBox="0 0 5 4"><path d="M0.5 0.8h4L2.5 3.2z" fill="#222"/></svg><svg style="left:479.50px;top:50.10px" width="9" height="9" viewBox="0 0 9 9"><rect x="1" y="1" width="7" height="7" fill="#d8c860"/><path d="M2.5 1v7M4.5 1v7M6.5 1v7" stroke="#d42a2a" stroke-width="0.8"/></svg><svg style="left:490.50px;top:52.60px" width="5" height="4" viewBox="0 0 5 4"><path d="M0.5 0.8h4L2.5 3.2z" fill="#222"/></svg><svg style="left:497.50px;top:50.10px" width="9" height="9" viewBox="0 0 9 9"><rect x="1.2" y="1.2" width="6.6" height="6.6" fill="none" stroke="#a5982e" stroke-width="1.2"/></svg><svg style="left:508.50px;top:50.10px" width="9" height="9" viewBox="0 0 9 9"><rect x="0.6" y="0.8" width="7.8" height="3.8" rx="1.4" fill="#e8c020" stroke="#d42a2a" stroke-width="0.7"/><path d="M4.5 4.6V8.2M2.6 8.2h3.8" stroke="#d42a2a" stroke-width="0.9"/></svg><div class="a" style="left:521.5px;top:50px;width:0.8px;height:9px;background:#d8d8d8"></div><div class="a" style="left:524.5px;top:50px;width:1px;height:9px;background:repeating-linear-gradient(#c4c4c4 0 1px,transparent 1px 2px)"></div><svg style="left:525.50px;top:50.10px" width="9" height="9" viewBox="0 0 9 9"><circle cx="4.5" cy="4.5" r="3.2" fill="none" stroke="#d42a2a" stroke-width="1"/><path d="M4.5 0.4V8.6M0.4 4.5H8.6" stroke="#d89020" stroke-width="0.8"/></svg><svg style="left:536.50px;top:52.60px" width="5" height="4" viewBox="0 0 5 4"><path d="M0.5 0.8h4L2.5 3.2z" fill="#222"/></svg><svg style="left:543.50px;top:50.10px" width="9" height="9" viewBox="0 0 9 9"><rect x="1" y="0.8" width="7" height="7.4" fill="#c8c0a0"/><path d="M2 0.8v7.4M4.5 0.8v7.4M7 0.8v7.4" stroke="#d03030" stroke-width="0.7"/></svg><svg style="left:554.50px;top:52.60px" width="5" height="4" viewBox="0 0 5 4"><path d="M0.5 0.8h4L2.5 3.2z" fill="#222"/></svg><svg style="left:560.50px;top:50.10px" width="9" height="9" viewBox="0 0 9 9"><path d="M1 1l7 7M8 1L1 8M4.5 0.5v8" stroke="#e0b020" stroke-width="0.9"/><circle cx="4.5" cy="4.5" r="1.2" fill="#d42a2a"/></svg><svg style="left:572.50px;top:50.10px" width="9" height="9" viewBox="0 0 9 9"><circle cx="4.5" cy="4.5" r="3.4" fill="none" stroke="#d42a2a" stroke-width="1"/><circle cx="4.5" cy="4.5" r="1" fill="#d8b020"/></svg><svg style="left:583.00px;top:52.60px" width="5" height="4" viewBox="0 0 5 4"><path d="M0.5 0.8h4L2.5 3.2z" fill="#222"/></svg><svg style="left:589.50px;top:50.10px" width="9" height="9" viewBox="0 0 9 9"><path d="M1 7.4L7 1.6" stroke="#d42a2a" stroke-width="1"/><path d="M2.6 8.2L8.2 2.8" stroke="#d8b020" stroke-width="1"/></svg><svg style="left:600.50px;top:52.60px" width="5" height="4" viewBox="0 0 5 4"><path d="M0.5 0.8h4L2.5 3.2z" fill="#222"/></svg><div class="a" style="left:609.5px;top:50px;width:0.8px;height:9px;background:#d8d8d8"></div><div class="a" style="left:613px;top:50px;width:1px;height:9px;background:repeating-linear-gradient(#c4c4c4 0 1px,transparent 1px 2px)"></div><svg style="left:613.20px;top:50.10px" width="9" height="9" viewBox="0 0 9 9"><path d="M1.4 3.6V7.4M4.5 3.6V7.4M7.6 3.6V7.4M0.6 5.5H8.4" stroke="#d42a2a" stroke-width="0.9"/></svg><svg style="left:624.00px;top:52.60px" width="5" height="4" viewBox="0 0 5 4"><path d="M0.5 0.8h4L2.5 3.2z" fill="#222"/></svg><svg style="left:631.10px;top:50.10px" width="9" height="9" viewBox="0 0 9 9"><rect x="1.6" y="1.6" width="5.8" height="5.8" fill="none" stroke="#d42a2a" stroke-width="1"/><path d="M1.6 4.5h5.8" stroke="#e8a0a0" stroke-width="0.6"/></svg><svg style="left:642.10px;top:52.60px" width="5" height="4" viewBox="0 0 5 4"><path d="M0.5 0.8h4L2.5 3.2z" fill="#222"/></svg><svg style="left:648.50px;top:50.10px" width="9" height="9" viewBox="0 0 9 9"><path d="M1 2H8M4.5 2V8" stroke="#d42a2a" stroke-width="1"/><path d="M3 0.8v2.6M6 0.8v2.6" stroke="#d8b020" stroke-width="0.8"/></svg><svg style="left:659.00px;top:52.60px" width="5" height="4" viewBox="0 0 5 4"><path d="M0.5 0.8h4L2.5 3.2z" fill="#222"/></svg><svg style="left:665.50px;top:50.10px" width="9" height="9" viewBox="0 0 9 9"><path d="M1.2 8V4Q4.5 0.2 7.8 4V8" stroke="#d8b020" stroke-width="1.1" fill="none"/><path d="M1 4.5h7M4.5 1.4V5" stroke="#d42a2a" stroke-width="0.9"/></svg><svg style="left:676.50px;top:50.10px" width="9" height="9" viewBox="0 0 9 9"><circle cx="4.5" cy="3.8" r="2.6" fill="none" stroke="#d42a2a" stroke-width="1.1"/><path d="M0.8 7.6h7.4" stroke="#d8b020" stroke-width="1"/></svg><svg style="left:688.00px;top:52.60px" width="5" height="4" viewBox="0 0 5 4"><path d="M0.5 0.8h4L2.5 3.2z" fill="#222"/></svg><svg style="left:694.50px;top:50.10px" width="9" height="9" viewBox="0 0 9 9"><path d="M7.4 1.6Q1 0.6 1.4 4.6Q1.6 8.4 7.4 7.4" stroke="#d42a2a" stroke-width="1.1" fill="none"/><path d="M5 4.5h3" stroke="#3aa040" stroke-width="1"/></svg><svg style="left:705.50px;top:52.60px" width="5" height="4" viewBox="0 0 5 4"><path d="M0.5 0.8h4L2.5 3.2z" fill="#222"/></svg><div class="a" style="left:714px;top:50px;width:0.8px;height:9px;background:#d8d8d8"></div><div class="a" style="left:717px;top:50px;width:1px;height:9px;background:repeating-linear-gradient(#c4c4c4 0 1px,transparent 1px 2px)"></div><svg style="left:718.50px;top:50.10px" width="9" height="9" viewBox="0 0 9 9"><rect x="0.8" y="1.4" width="7.4" height="6" fill="#cacaca" stroke="#999" stroke-width="0.5"/><circle cx="6.6" cy="6.8" r="1.6" fill="#d42a2a"/></svg><svg style="left:729.50px;top:50.10px" width="9" height="9" viewBox="0 0 9 9"><rect x="0.8" y="1.4" width="7.4" height="6" fill="#cacaca" stroke="#999" stroke-width="0.5"/><circle cx="6.6" cy="6.8" r="1.6" fill="#d42a2a"/></svg><div class="a" style="left:740px;top:50px;width:0.8px;height:9px;background:#d8d8d8"></div><div class="a" style="left:743px;top:50px;width:1px;height:9px;background:repeating-linear-gradient(#c4c4c4 0 1px,transparent 1px 2px)"></div><svg style="left:747.50px;top:50.10px" width="9" height="9" viewBox="0 0 9 9"><path d="M0.8 8.2V5.4H3.6V3H6V0.8H8.2V8.2z" fill="#a8a8a8"/></svg><svg style="left:759.00px;top:50.10px" width="9" height="9" viewBox="0 0 9 9"><rect x="0.8" y="0.8" width="7.4" height="7.4" fill="#7ab020" stroke="#b8a020" stroke-width="0.8"/><path d="M1.6 7.4L7.4 1.6" stroke="#c8e060" stroke-width="1"/></svg><svg style="left:770.50px;top:50.10px" width="9" height="9" viewBox="0 0 9 9"><rect x="0.8" y="1.2" width="7.4" height="5.6" fill="#f0f0a0" stroke="#999" stroke-width="0.5"/><path d="M2 8.2L4 6" stroke="#3a9a3a" stroke-width="1.2"/></svg><svg style="left:782.50px;top:50.10px" width="9" height="9" viewBox="0 0 9 9"><rect x="0.8" y="1.6" width="7.4" height="5.8" fill="#3aa84a" stroke="#5080b0" stroke-width="0.6"/><path d="M0.8 5.5h7.4" stroke="#a8d8a8" stroke-width="0.8"/></svg><svg style="left:793.50px;top:50.10px" width="9" height="9" viewBox="0 0 9 9"><circle cx="4.5" cy="4.5" r="3.6" fill="#f2dada" stroke="#d42a2a" stroke-width="1.2"/><path d="M2.2 2.2l4.6 4.6" stroke="#d42a2a" stroke-width="1.2"/></svg><div class="a" style="left:807.5px;top:50px;width:0.8px;height:9px;background:#d8d8d8"></div><div class="a" style="left:810.5px;top:50px;width:1px;height:9px;background:repeating-linear-gradient(#c4c4c4 0 1px,transparent 1px 2px)"></div><svg style="left:811.00px;top:50.10px" width="9" height="9" viewBox="0 0 9 9"><rect x="0.8" y="0.8" width="7.4" height="7.4" fill="#e8f0fa" stroke="#2f62b8" stroke-width="0.9"/><path d="M2.2 7.2L4.5 2L6.8 7.2" stroke="#2f62b8" stroke-width="0.9" fill="none"/></svg><svg style="left:822.50px;top:50.10px" width="9" height="9" viewBox="0 0 9 9"><path d="M1.5 7.5L3.5 3L7.5 1.5" stroke="#4a6a9a" stroke-width="0.8" fill="none"/><circle cx="1.5" cy="7.5" r="1.3" fill="#2f62b8"/><circle cx="3.5" cy="3" r="1.3" fill="#2f62b8"/><circle cx="7.5" cy="1.5" r="1.3" fill="#2f62b8"/></svg><svg style="left:834.50px;top:50.10px" width="9" height="9" viewBox="0 0 9 9"><path d="M1.2 1.6h3.6Q7.6 1.6 7.6 4.6V8" stroke="#a8a8a8" stroke-width="1.6" fill="none"/></svg><svg style="left:845.50px;top:50.10px" width="9" height="9" viewBox="0 0 9 9"><path d="M4.5 0.8L8.2 4.5L4.5 8.2L0.8 4.5z" fill="none" stroke="#355a9a" stroke-width="1.1"/></svg><svg style="left:855.50px;top:52.60px" width="5" height="4" viewBox="0 0 5 4"><path d="M0.5 0.8h4L2.5 3.2z" fill="#222"/></svg><svg style="left:861.50px;top:50.10px" width="9" height="9" viewBox="0 0 9 9"><path d="M1.5 0.8V8.2M4.5 0.8V8.2M7.5 0.8V8.2" stroke="#405a80" stroke-width="0.9" stroke-dasharray="1.2 0.8"/></svg><svg style="left:873.50px;top:52.60px" width="5" height="4" viewBox="0 0 5 4"><path d="M0.5 0.8h4L2.5 3.2z" fill="#222"/></svg><svg style="left:881.00px;top:50.10px" width="9" height="9" viewBox="0 0 9 9"><path d="M1.4 7.6L7.6 1.4" stroke="#2f62b8" stroke-width="0.9"/><circle cx="1.5" cy="7.5" r="1.1" fill="#2f62b8"/><circle cx="7.5" cy="1.5" r="1.1" fill="#2f62b8"/></svg><svg style="left:892.50px;top:50.10px" width="9" height="9" viewBox="0 0 9 9"><path d="M1 4.5L4.5 1.5H8V5L5 7.5z" fill="#3a72c0"/><path d="M0.6 8.2L3 6" stroke="#777" stroke-width="0.7"/></svg><svg style="left:903.50px;top:50.10px" width="9" height="9" viewBox="0 0 9 9"><path d="M1 8.2L2.2 5.6L7 0.8L8.2 2L3.4 6.8z" fill="#3a3a3a"/><path d="M1 8.4h4" stroke="#999" stroke-width="0.6"/></svg><svg style="left:915.00px;top:50.10px" width="9" height="9" viewBox="0 0 9 9"><path d="M0.6 4.5Q4.5 0.6 8.4 4.5Q4.5 8.4 0.6 4.5z" fill="#e8eef8" stroke="#2f62b8" stroke-width="0.7"/><circle cx="4.5" cy="4.5" r="1.7" fill="#1a3a8a"/></svg><svg style="left:925.50px;top:50.10px" width="9" height="9" viewBox="0 0 9 9"><rect x="2" y="1.6" width="5" height="6.2" fill="#a8b8d8"/><ellipse cx="4.5" cy="1.8" rx="2.5" ry="1" fill="#d8e0f0" stroke="#6a7aa0" stroke-width="0.5"/><ellipse cx="4.5" cy="7.6" rx="2.5" ry="1" fill="#8898c0"/></svg>
<div class="a" style="left:21.5px;top:113.6px;width:81.5px;height:9.8px;background:#dcdcf8;"></div>
<div class="t" style="left:3.3px;top:95.50px;font-size:6.5px;line-height:7.80px;color:#333;font-weight:400;transform:scaleX(0.93);">Application</div>
<div class="t" style="left:23.0px;top:105.30px;font-size:6.5px;line-height:7.80px;color:#111;font-weight:700;transform:scaleX(0.88);">Ex14_19_12_2022</div>
<div class="t" style="left:33.8px;top:115.30px;font-size:6.5px;line-height:7.80px;color:#111;font-weight:700;transform:scaleX(0.88);">Ex14</div>
<div class="t" style="left:43.7px;top:125.30px;font-size:6.5px;line-height:7.80px;color:#a0a0a0;font-weight:400;transform:scaleX(0.91);">Origin</div>
<div class="t" style="left:43.7px;top:135.30px;font-size:6.5px;line-height:7.80px;color:#a0a0a0;font-weight:400;transform:scaleX(0.91);">Pad</div>
<div class="t" style="left:43.7px;top:145.30px;font-size:6.5px;line-height:7.80px;color:#a0a0a0;font-weight:400;transform:scaleX(0.91);">Pocket</div>
<div class="t" style="left:43.7px;top:155.30px;font-size:6.5px;line-height:7.80px;color:#a0a0a0;font-weight:400;transform:scaleX(0.91);">Fillet</div>
<div class="t" style="left:43.7px;top:165.30px;font-size:6.5px;line-height:7.80px;color:#a0a0a0;font-weight:400;transform:scaleX(0.91);">Pocket001</div>
<div class="t" style="left:43.7px;top:175.30px;font-size:6.5px;line-height:7.80px;color:#111;font-weight:400;transform:scaleX(0.91);">Pocket002</div>
<div class="t" style="left:33.8px;top:185.30px;font-size:6.5px;line-height:7.80px;color:#111;font-weight:400;transform:scaleX(0.91);">Page</div>
<div class="t" style="left:43.7px;top:195.30px;font-size:6.5px;line-height:7.80px;color:#111;font-weight:400;transform:scaleX(0.91);">Template</div>
<div class="t" style="left:43.7px;top:205.30px;font-size:6.5px;line-height:7.80px;color:#111;font-weight:400;transform:scaleX(0.91);">ProjGroup</div>
<div class="t" style="left:54.0px;top:215.30px;font-size:6.5px;line-height:7.80px;color:#111;font-weight:400;transform:scaleX(0.91);">Front</div>
<div class="t" style="left:64.0px;top:225.30px;font-size:6.5px;line-height:7.80px;color:#111;font-weight:400;transform:scaleX(0.91);">Dimension</div>
<div class="t" style="left:64.0px;top:235.30px;font-size:6.5px;line-height:7.80px;color:#111;font-weight:400;transform:scaleX(0.91);">Dimension010</div>
<div class="t" style="left:64.0px;top:245.30px;font-size:6.5px;line-height:7.80px;color:#111;font-weight:400;transform:scaleX(0.91);">Dimension011</div>
<div class="t" style="left:64.0px;top:255.30px;font-size:6.5px;line-height:7.80px;color:#111;font-weight:400;transform:scaleX(0.91);">Dimension012</div>
<div class="t" style="left:54.0px;top:265.30px;font-size:6.5px;line-height:7.80px;color:#111;font-weight:400;transform:scaleX(0.91);">Right</div>
<div class="t" style="left:64.0px;top:275.30px;font-size:6.5px;line-height:7.80px;color:#111;font-weight:400;transform:scaleX(0.91);">Dimension001</div>
<div class="t" style="left:64.0px;top:285.30px;font-size:6.5px;line-height:7.80px;color:#111;font-weight:400;transform:scaleX(0.91);">Dimension002</div>
<div class="t" style="left:64.0px;top:295.30px;font-size:6.5px;line-height:7.80px;color:#111;font-weight:400;transform:scaleX(0.91);">Dimension003</div>
<div class="t" style="left:54.0px;top:305.30px;font-size:6.5px;line-height:7.80px;color:#111;font-weight:400;transform:scaleX(0.91);">FrontTopRight</div>
<div class="t" style="left:54.0px;top:315.30px;font-size:6.5px;line-height:7.80px;color:#111;font-weight:400;transform:scaleX(0.91);">Top</div>
<div class="t" style="left:64.0px;top:325.30px;font-size:6.5px;line-height:7.80px;color:#111;font-weight:400;transform:scaleX(0.91);">Dimension004</div>
<div class="t" style="left:64.0px;top:335.30px;font-size:6.5px;line-height:7.80px;color:#111;font-weight:400;transform:scaleX(0.91);">Dimension005</div>
<div class="t" style="left:64.0px;top:345.30px;font-size:6.5px;line-height:7.80px;color:#111;font-weight:400;transform:scaleX(0.91);">Dimension006</div>
<div class="t" style="left:64.0px;top:355.30px;font-size:6.5px;line-height:7.80px;color:#111;font-weight:400;transform:scaleX(0.91);">Dimension007</div>
<div class="t" style="left:64.0px;top:365.30px;font-size:6.5px;line-height:7.80px;color:#111;font-weight:400;transform:scaleX(0.91);">Dimension008</div>
<div class="t" style="left:64.0px;top:375.30px;font-size:6.5px;line-height:7.80px;color:#111;font-weight:400;transform:scaleX(0.91);">Dimension009</div>
<div class="t" style="left:43.7px;top:385.30px;font-size:6.5px;line-height:7.80px;color:#111;font-weight:400;transform:scaleX(0.91);">Annotation</div>
<div class="t" style="left:43.7px;top:395.30px;font-size:6.5px;line-height:7.80px;color:#111;font-weight:400;transform:scaleX(0.91);">Symbol</div>
<div class="t" style="left:43.7px;top:405.30px;font-size:6.5px;line-height:7.80px;color:#111;font-weight:400;transform:scaleX(0.91);">Symbol001</div>
<svg style="left:2.4000000000000004px;top:106.0px" width="7" height="6" viewBox="0 0 7 6"><path d="M1 2l2.5 2.5L6 2" fill="none" stroke="#4a4a4a" stroke-width="1.0"/></svg><svg style="left:11.6px;top:104.4px" width="9" height="9" viewBox="0 0 9 9"><rect x="1.5" y="0.8" width="6" height="7.6" fill="#fafafa" stroke="#aaa" stroke-width="0.6"/><circle cx="4.6" cy="4.8" r="2.3" fill="#2a56b8"/><path d="M3 3.4a2.4 2.4 0 0 1 3.8-0.4L5.6 4.6z" fill="#d42020"/></svg><svg style="left:13.2px;top:116.0px" width="7" height="6" viewBox="0 0 7 6"><path d="M1 2l2.5 2.5L6 2" fill="none" stroke="#4a4a4a" stroke-width="1.0"/></svg><svg style="left:22.4px;top:114.4px" width="9" height="9" viewBox="0 0 9 9"><path d="M4.5 0.8L8 2.6V6.6L4.5 8.4L1 6.6V2.6z" fill="#3a5aa8"/><path d="M4.5 0.8L8 2.6L4.5 4.4L1 2.6z" fill="#6a8ad0"/></svg><svg style="left:23.1px;top:125.5px" width="7" height="7" viewBox="0 0 7 7"><path d="M2 1l2.5 2.5L2 6" fill="none" stroke="#8a8a8a" stroke-width="0.95"/></svg><svg style="left:32.3px;top:124.4px" width="9" height="9" viewBox="0 0 9 9"><path d="M3 1v5.5H8M3 6.5L1 8.3" fill="none" stroke="#a6a6a6" stroke-width="0.9"/></svg><svg style="left:23.1px;top:135.5px" width="7" height="7" viewBox="0 0 7 7"><path d="M2 1l2.5 2.5L2 6" fill="none" stroke="#8a8a8a" stroke-width="0.95"/></svg><svg style="left:32.3px;top:134.4px" width="9" height="9" viewBox="0 0 9 9"><ellipse cx="4.5" cy="2.6" rx="3.3" ry="1.6" fill="#b0b0b0"/><rect x="1.2" y="2.6" width="6.6" height="4" fill="#a2a2a2"/><ellipse cx="4.5" cy="6.6" rx="3.3" ry="1.6" fill="#a2a2a2"/><path d="M1.2 4.6h6.6" stroke="#ddd" stroke-width="0.5"/></svg><svg style="left:23.1px;top:145.5px" width="7" height="7" viewBox="0 0 7 7"><path d="M2 1l2.5 2.5L2 6" fill="none" stroke="#8a8a8a" stroke-width="0.95"/></svg><svg style="left:32.3px;top:144.4px" width="9" height="9" viewBox="0 0 9 9"><path d="M1 4.5L5 2.2L8.3 3.6V5.5L4.3 7.8L1 6.4z" fill="#a8a8a8"/><path d="M1 4.5L5 2.2L8.3 3.6L4.3 5.9z" fill="#c4c4c4"/></svg><svg style="left:32.3px;top:154.4px" width="9" height="9" viewBox="0 0 9 9"><path d="M1.2 4.4Q4 1.6 8 3V6Q5 8.6 1.2 6.8z" fill="#ababab"/></svg><svg style="left:23.1px;top:165.5px" width="7" height="7" viewBox="0 0 7 7"><path d="M2 1l2.5 2.5L2 6" fill="none" stroke="#8a8a8a" stroke-width="0.95"/></svg><svg style="left:32.3px;top:164.4px" width="9" height="9" viewBox="0 0 9 9"><path d="M1 4.5L5 2.2L8.3 3.6V5.5L4.3 7.8L1 6.4z" fill="#a8a8a8"/><path d="M1 4.5L5 2.2L8.3 3.6L4.3 5.9z" fill="#c4c4c4"/></svg><svg style="left:23.1px;top:175.5px" width="7" height="7" viewBox="0 0 7 7"><path d="M2 1l2.5 2.5L2 6" fill="none" stroke="#8a8a8a" stroke-width="0.95"/></svg><svg style="left:32.3px;top:174.4px" width="9" height="9" viewBox="0 0 9 9"><path d="M4.5 0.8L8.2 2.6V6.6L4.5 8.4L0.8 6.6V2.6z" fill="#3052b0"/><path d="M0.8 2.6L4.5 4.4V8.4L0.8 6.6z" fill="#d02828"/><path d="M4.5 4.4L8.2 2.6V6.6L4.5 8.4z" fill="#2a8a2a"/><path d="M5 5.5h3.5v3h-3.5z" fill="#3ad23a"/></svg><svg style="left:13.2px;top:186.0px" width="7" height="6" viewBox="0 0 7 6"><path d="M1 2l2.5 2.5L6 2" fill="none" stroke="#4a4a4a" stroke-width="1.0"/></svg><svg style="left:22.4px;top:184.4px" width="9" height="9" viewBox="0 0 9 9"><rect x="2" y="0.6" width="5" height="7.8" fill="#fbfbfb" stroke="#a8a8a8" stroke-width="0.7"/></svg><svg style="left:32.3px;top:194.4px" width="9" height="9" viewBox="0 0 9 9"><rect x="0.8" y="1" width="7.4" height="7" fill="#e4e4e4" stroke="#a0a0a0" stroke-width="0.6"/><rect x="2" y="2.2" width="5" height="3.8" fill="#fafafa"/></svg><svg style="left:23.1px;top:206.0px" width="7" height="6" viewBox="0 0 7 6"><path d="M1 2l2.5 2.5L6 2" fill="none" stroke="#4a4a4a" stroke-width="1.0"/></svg><svg style="left:32.3px;top:204.4px" width="9" height="9" viewBox="0 0 9 9"><path d="M0.8 2.6L4.5 1L8.2 2.6V6.6L4.5 8.2L0.8 6.6z" fill="#3cc8d2"/><path d="M0.8 2.6L4.5 1L8.2 2.6L4.5 4.2z" fill="#8ae6ec"/></svg><svg style="left:33.4px;top:216.0px" width="7" height="6" viewBox="0 0 7 6"><path d="M1 2l2.5 2.5L6 2" fill="none" stroke="#4a4a4a" stroke-width="1.0"/></svg><svg style="left:42.599999999999994px;top:214.4px" width="9" height="9" viewBox="0 0 9 9"><path d="M0.8 2.6L4.5 1L8.2 2.6V6.6L4.5 8.2L0.8 6.6z" fill="#3cc8d2"/><path d="M4.8 3.2h3.6v4.6H4.8z" fill="#dcdcdc" stroke="#777" stroke-width="0.5"/></svg><svg style="left:52.599999999999994px;top:224.4px" width="9" height="9" viewBox="0 0 9 9"><path d="M1 2.2V6.8M8 2.2V6.8M1 4.5H8" stroke="#a39a3a" stroke-width="1.2" fill="none"/></svg><svg style="left:52.599999999999994px;top:234.4px" width="9" height="9" viewBox="0 0 9 9"><path d="M1 2.2V6.8M8 2.2V6.8M1 4.5H8" stroke="#a39a3a" stroke-width="1.2" fill="none"/></svg><svg style="left:52.599999999999994px;top:244.4px" width="9" height="9" viewBox="0 0 9 9"><path d="M1 2.2V6.8M8 2.2V6.8M1 4.5H8" stroke="#a39a3a" stroke-width="1.2" fill="none"/></svg><svg style="left:52.599999999999994px;top:254.4px" width="9" height="9" viewBox="0 0 9 9"><path d="M2.4 1H6.6M2.4 8H6.6M4.5 1V8" stroke="#a39a3a" stroke-width="1.2" fill="none"/></svg><svg style="left:33.4px;top:266.0px" width="7" height="6" viewBox="0 0 7 6"><path d="M1 2l2.5 2.5L6 2" fill="none" stroke="#4a4a4a" stroke-width="1.0"/></svg><svg style="left:42.599999999999994px;top:264.4px" width="9" height="9" viewBox="0 0 9 9"><path d="M0.8 2.6L4.5 1L8.2 2.6V6.6L4.5 8.2L0.8 6.6z" fill="#3cc8d2"/><path d="M4.8 3.2h3.6v4.6H4.8z" fill="#dcdcdc" stroke="#777" stroke-width="0.5"/></svg><svg style="left:52.599999999999994px;top:274.4px" width="9" height="9" viewBox="0 0 9 9"><path d="M2.4 1H6.6M2.4 8H6.6M4.5 1V8" stroke="#a39a3a" stroke-width="1.2" fill="none"/></svg><svg style="left:52.599999999999994px;top:284.4px" width="9" height="9" viewBox="0 0 9 9"><path d="M2.4 1H6.6M2.4 8H6.6M4.5 1V8" stroke="#a39a3a" stroke-width="1.2" fill="none"/></svg><svg style="left:52.599999999999994px;top:294.4px" width="9" height="9" viewBox="0 0 9 9"><path d="M1 2.2V6.8M8 2.2V6.8M1 4.5H8" stroke="#a39a3a" stroke-width="1.2" fill="none"/></svg><svg style="left:42.599999999999994px;top:304.4px" width="9" height="9" viewBox="0 0 9 9"><path d="M0.8 2.6L4.5 1L8.2 2.6V6.6L4.5 8.2L0.8 6.6z" fill="#3cc8d2"/><path d="M0.8 2.6L4.5 1L8.2 2.6L4.5 4.2z" fill="#8ae6ec"/></svg><svg style="left:33.4px;top:316.0px" width="7" height="6" viewBox="0 0 7 6"><path d="M1 2l2.5 2.5L6 2" fill="none" stroke="#4a4a4a" stroke-width="1.0"/></svg><svg style="left:42.599999999999994px;top:314.4px" width="9" height="9" viewBox="0 0 9 9"><path d="M0.8 2.6L4.5 1L8.2 2.6V6.6L4.5 8.2L0.8 6.6z" fill="#3cc8d2"/><path d="M4.8 3.2h3.6v4.6H4.8z" fill="#dcdcdc" stroke="#777" stroke-width="0.5"/></svg><svg style="left:52.599999999999994px;top:324.4px" width="9" height="9" viewBox="0 0 9 9"><path d="M2.4 1H6.6M2.4 8H6.6M4.5 1V8" stroke="#a39a3a" stroke-width="1.2" fill="none"/></svg><svg style="left:52.599999999999994px;top:334.4px" width="9" height="9" viewBox="0 0 9 9"><path d="M1.3 2.2Q5 1.8 7.5 7.2M1.5 6.8L4.6 3.4" stroke="#a39a3a" stroke-width="1.2" fill="none"/></svg><svg style="left:52.599999999999994px;top:344.4px" width="9" height="9" viewBox="0 0 9 9"><path d="M2.4 1H6.6M2.4 8H6.6M4.5 1V8" stroke="#a39a3a" stroke-width="1.2" fill="none"/></svg><svg style="left:52.599999999999994px;top:354.4px" width="9" height="9" viewBox="0 0 9 9"><path d="M2.4 1H6.6M2.4 8H6.6M4.5 1V8" stroke="#a39a3a" stroke-width="1.2" fill="none"/></svg><svg style="left:52.599999999999994px;top:364.4px" width="9" height="9" viewBox="0 0 9 9"><path d="M1 2.2V6.8M8 2.2V6.8M1 4.5H8" stroke="#a39a3a" stroke-width="1.2" fill="none"/></svg><svg style="left:52.599999999999994px;top:374.4px" width="9" height="9" viewBox="0 0 9 9"><path d="M1 2.2V6.8M8 2.2V6.8M1 4.5H8" stroke="#a39a3a" stroke-width="1.2" fill="none"/></svg><svg style="left:32.3px;top:384.4px" width="9" height="9" viewBox="0 0 9 9"><rect x="0.8" y="0.8" width="7.4" height="7.4" fill="#7a9ad0" stroke="#3a66b8" stroke-width="0.8"/><path d="M2.2 7.2L4.5 1.8L6.8 7.2M3.2 5.4H5.8" stroke="#f4f8ff" stroke-width="1" fill="none"/></svg><svg style="left:32.3px;top:394.4px" width="9" height="9" viewBox="0 0 9 9"><rect x="0.8" y="1.4" width="7.4" height="6.2" fill="#d4d4d4" stroke="#999" stroke-width="0.6"/><path d="M2 6L4 3.6L5.5 5L7 3.2" stroke="#777" stroke-width="0.6" fill="none"/></svg><svg style="left:32.3px;top:404.4px" width="9" height="9" viewBox="0 0 9 9"><rect x="0.8" y="1.8" width="7.4" height="6.2" fill="#d4d4d4" stroke="#999" stroke-width="0.6"/><circle cx="6" cy="2.8" r="2.4" fill="#2050c8"/><path d="M4.8 2.8l1 1 1.6-1.8" stroke="#fff" stroke-width="0.7" fill="none"/></svg>
<svg style="left:0;top:0" width="960" height="520" viewBox="0 0 960 520"><rect x="312.5" y="61.8" width="568" height="403" fill="#fff" stroke="#6e6e6e" stroke-width="1.1"/><rect x="336.3" y="71.4" width="533.6" height="382.2" fill="none" stroke="#a8a8a8" stroke-width="0.8"/><rect x="341.5" y="76.8" width="522.8" height="371.4" fill="none" stroke="#747474" stroke-width="1.15"/><path d="M414.4 71.4V76.8M414.4 448.2V453.6" stroke="#999" stroke-width="0.7"/><path d="M490.3 71.4V76.8M490.3 448.2V453.6" stroke="#999" stroke-width="0.7"/><path d="M566.2 71.4V76.8M566.2 448.2V453.6" stroke="#999" stroke-width="0.7"/><path d="M642.1 71.4V76.8M642.1 448.2V453.6" stroke="#999" stroke-width="0.7"/><path d="M718 71.4V76.8M718 448.2V453.6" stroke="#999" stroke-width="0.7"/><path d="M793.9 71.4V76.8M793.9 448.2V453.6" stroke="#999" stroke-width="0.7"/><path d="M336.3 148.5H341.5M864.3 148.5H869.9" stroke="#999" stroke-width="0.7"/><path d="M336.3 224.3H341.5M864.3 224.3H869.9" stroke="#999" stroke-width="0.7"/><path d="M336.3 300.2H341.5M864.3 300.2H869.9" stroke="#999" stroke-width="0.7"/><path d="M336.3 376.1H341.5M864.3 376.1H869.9" stroke="#999" stroke-width="0.7"/><g fill="#555" font-family="Liberation Sans"><text x="375.5" y="75.9" font-size="3.6" text-anchor="middle">1</text><text x="375.5" y="452.9" font-size="3.6" text-anchor="middle">1</text><text x="452.3" y="75.9" font-size="3.6" text-anchor="middle">2</text><text x="452.3" y="452.9" font-size="3.6" text-anchor="middle">2</text><text x="528.2" y="75.9" font-size="3.6" text-anchor="middle">3</text><text x="528.2" y="452.9" font-size="3.6" text-anchor="middle">3</text><text x="603.8" y="75.9" font-size="3.6" text-anchor="middle">4</text><text x="603.8" y="452.9" font-size="3.6" text-anchor="middle">4</text><text x="679.4" y="75.9" font-size="3.6" text-anchor="middle">5</text><text x="679.4" y="452.9" font-size="3.6" text-anchor="middle">5</text><text x="755.2" y="75.9" font-size="3.6" text-anchor="middle">6</text><text x="755.2" y="452.9" font-size="3.6" text-anchor="middle">6</text><text x="831.1" y="75.9" font-size="3.6" text-anchor="middle">7</text><text x="831.1" y="452.9" font-size="3.6" text-anchor="middle">7</text><text x="338.9" y="110.0" font-size="3.6" text-anchor="middle">A</text><text x="867.1" y="110.0" font-size="3.6" text-anchor="middle">A</text><text x="338.9" y="187.5" font-size="3.6" text-anchor="middle">B</text><text x="867.1" y="187.5" font-size="3.6" text-anchor="middle">B</text><text x="338.9" y="263.5" font-size="3.6" text-anchor="middle">C</text><text x="867.1" y="263.5" font-size="3.6" text-anchor="middle">C</text><text x="338.9" y="339.5" font-size="3.6" text-anchor="middle">D</text><text x="867.1" y="339.5" font-size="3.6" text-anchor="middle">D</text><text x="338.9" y="415.5" font-size="3.6" text-anchor="middle">E</text><text x="867.1" y="415.5" font-size="3.6" text-anchor="middle">E</text></g><path d="M372.3 173.4V213.5H494.3V132.7H453.2V173.4H372.3M413.2 173.4V213.5M453.2 153H494.3" stroke="#5a5a5a" stroke-width="0.95" fill="none"/><path d="M453.2 132.7V117.5M494.3 132.7V117.5M494.3 132.7H515M494.3 213.5H515M372.3 173.4H355M372.3 213.5H355" stroke="#8a8a8a" stroke-width="0.7" fill="none"/><path d="M453.2 120.7H494.3" stroke="#8a8a8a" stroke-width="0.7" fill="none"/><path d="M453.20 120.70L459.70 119.20L459.70 122.20z" fill="#111"/><path d="M494.30 120.70L487.80 122.20L487.80 119.20z" fill="#111"/><text x="473.75" y="116.6" font-size="8.4" text-anchor="middle" dominant-baseline="central" fill="#333" font-family="Liberation Sans" textLength="6.4" lengthAdjust="spacingAndGlyphs">20</text><path d="M512 132.7V213.5" stroke="#8a8a8a" stroke-width="0.7" fill="none"/><path d="M512.00 132.70L513.50 139.20L510.50 139.20z" fill="#111"/><path d="M512.00 213.50L510.50 207.00L513.50 207.00z" fill="#111"/><text x="508.3" y="173.1" font-size="8.4" text-anchor="middle" dominant-baseline="central" fill="#333" font-family="Liberation Sans" textLength="6.4" lengthAdjust="spacingAndGlyphs" transform="rotate(-90 508.3 173.1)">40</text><path d="M357.8 173.4V213.5" stroke="#8a8a8a" stroke-width="0.7" fill="none"/><path d="M357.80 173.40L359.30 179.90L356.30 179.90z" fill="#111"/><path d="M357.80 213.50L356.30 207.00L359.30 207.00z" fill="#111"/><text x="353.9" y="193.45" font-size="8.4" text-anchor="middle" dominant-baseline="central" fill="#333" font-family="Liberation Sans" textLength="6.4" lengthAdjust="spacingAndGlyphs" transform="rotate(-90 353.9 193.45)">20</text><path d="M556.7 132.3H576.3L616.7 153H636.9V213.6H556.7z M556.7 173.2H636.9M596.5 173.2V213.6" stroke="#5a5a5a" stroke-width="0.95" fill="none"/><path d="M556.7 132.3V114.5M576.3 132.3V114.5M616.7 153V136M636.9 153V136M636.9 153H657.5M636.9 173.2H657.5M556.7 213.6V237M636.9 213.6V237" stroke="#8a8a8a" stroke-width="0.7" fill="none"/><path d="M556.7 117.5H576.3" stroke="#8a8a8a" stroke-width="0.7" fill="none"/><path d="M556.70 117.50L563.20 116.00L563.20 119.00z" fill="#111"/><path d="M576.30 117.50L569.80 119.00L569.80 116.00z" fill="#111"/><text x="565.4" y="113.3" font-size="8.4" text-anchor="middle" dominant-baseline="central" fill="#333" font-family="Liberation Sans" textLength="6.4" lengthAdjust="spacingAndGlyphs">10</text><path d="M616.7 139H636.9" stroke="#8a8a8a" stroke-width="0.7" fill="none"/><path d="M616.70 139.00L623.20 137.50L623.20 140.50z" fill="#111"/><path d="M636.90 139.00L630.40 140.50L630.40 137.50z" fill="#111"/><text x="626.6" y="134.8" font-size="8.4" text-anchor="middle" dominant-baseline="central" fill="#333" font-family="Liberation Sans" textLength="6.4" lengthAdjust="spacingAndGlyphs">10</text><path d="M654.4 153V173.2" stroke="#8a8a8a" stroke-width="0.7" fill="none"/><path d="M654.40 153.00L655.90 159.50L652.90 159.50z" fill="#111"/><path d="M654.40 173.20L652.90 166.70L655.90 166.70z" fill="#111"/><text x="649.6" y="163.1" font-size="8.4" text-anchor="middle" dominant-baseline="central" fill="#333" font-family="Liberation Sans" textLength="6.4" lengthAdjust="spacingAndGlyphs" transform="rotate(-90 649.6 163.1)">10</text><path d="M556.7 234H636.9" stroke="#8a8a8a" stroke-width="0.7" fill="none"/><path d="M556.70 234.00L563.20 232.50L563.20 235.50z" fill="#111"/><path d="M636.90 234.00L630.40 235.50L630.40 232.50z" fill="#111"/><text x="596.8" y="230.6" font-size="8.4" text-anchor="middle" dominant-baseline="central" fill="#333" font-family="Liberation Sans" textLength="6.4" lengthAdjust="spacingAndGlyphs">40</text><path d="M556 276H637.2V357A40.5 40.5 0 0 1 596.7 397.6H556z M556 316.7H637.2 M576.3 276V316.7 M616.9 276V316.7 M576.3 337H616.9L576.3 377.3V337 M556 377.3H576.3" stroke="#5a5a5a" stroke-width="0.95" fill="none"/><path d="M596.3 276V316.7" stroke="#777" stroke-width="0.6" stroke-dasharray="2.2 1.4" fill="none"/><path d="M616.9 337V421M576.3 377.3V421M556 397.6V421M637.2 276H663M596.7 397.6H663M576.3 337H535.5M556 377.3H535.5M556 397.6H535.5" stroke="#8a8a8a" stroke-width="0.7" fill="none"/><path d="M660 276V397.6" stroke="#8a8a8a" stroke-width="0.7" fill="none"/><path d="M660.00 276.00L661.50 282.50L658.50 282.50z" fill="#111"/><path d="M660.00 397.60L658.50 391.10L661.50 391.10z" fill="#111"/><text x="655.2" y="332.7" font-size="8.4" text-anchor="middle" dominant-baseline="central" fill="#333" font-family="Liberation Sans" textLength="6.4" lengthAdjust="spacingAndGlyphs" transform="rotate(-90 655.2 332.7)">60</text><path d="M538.5 337V377.3" stroke="#8a8a8a" stroke-width="0.7" fill="none"/><path d="M538.50 337.00L540.00 343.50L537.00 343.50z" fill="#111"/><path d="M538.50 377.30L537.00 370.80L540.00 370.80z" fill="#111"/><text x="534.2" y="354" font-size="8.4" text-anchor="middle" dominant-baseline="central" fill="#333" font-family="Liberation Sans" textLength="6.4" lengthAdjust="spacingAndGlyphs" transform="rotate(-90 534.2 354)">20</text><path d="M538.5 377.3V397.6" stroke="#8a8a8a" stroke-width="0.7" fill="none"/><path d="M538.50 377.30L540.00 383.80L537.00 383.80z" fill="#111"/><path d="M538.50 397.60L537.00 391.10L540.00 391.10z" fill="#111"/><text x="534.2" y="383.6" font-size="8.4" text-anchor="middle" dominant-baseline="central" fill="#333" font-family="Liberation Sans" textLength="6.4" lengthAdjust="spacingAndGlyphs" transform="rotate(-90 534.2 383.6)">10</text><path d="M556 418.2H576.3" stroke="#8a8a8a" stroke-width="0.7" fill="none"/><path d="M556.00 418.20L562.50 416.70L562.50 419.70z" fill="#111"/><path d="M576.30 418.20L569.80 419.70L569.80 416.70z" fill="#111"/><text x="565.5" y="414.6" font-size="8.4" text-anchor="middle" dominant-baseline="central" fill="#333" font-family="Liberation Sans" textLength="6.4" lengthAdjust="spacingAndGlyphs">10</text><path d="M576.3 418.2H616.9" stroke="#8a8a8a" stroke-width="0.7" fill="none"/><path d="M576.30 418.20L582.80 416.70L582.80 419.70z" fill="#111"/><path d="M616.90 418.20L610.40 419.70L610.40 416.70z" fill="#111"/><text x="599.4" y="414.6" font-size="8.4" text-anchor="middle" dominant-baseline="central" fill="#333" font-family="Liberation Sans" textLength="6.4" lengthAdjust="spacingAndGlyphs">20</text><path d="M596.9 357.3L639 382.5" stroke="#8a8a8a" stroke-width="0.7" fill="none"/><path d="M639.00 382.50L633.14 380.61L634.58 378.21z" fill="#111"/><text x="643.5" y="383.5" font-size="8.4" text-anchor="middle" dominant-baseline="central" fill="#333" font-family="Liberation Sans" textLength="9.6" lengthAdjust="spacingAndGlyphs" transform="rotate(36 643.5 383.5)">R20</text><path d="M793.1 89.2L764.6 105.5M793.1 89.2L807.1 97.3M764.6 105.5L779.3 113.7M779.3 113.7L807.1 97.3M779.3 113.7L807.6 147.4M807.1 97.3L835.9 131.2M807.6 147.4L835.9 131.2M835.9 131.2L850.4 139.5M807.6 147.4L821.5 155.6M821.5 155.6L850.4 139.5M764.6 105.5L764.6 139.5M821.5 155.6L821.4 171.8M850.4 139.5L850.4 188.8M764.6 139.5L707.4 172.2M764.6 139.5L821.4 171.8M707.4 172.2L707.4 205.2M707.4 172.2L735.2 187.9M707.4 205.2L735.2 221.2M735.2 187.9L735.2 221.2M793.1 188.5L793.1 221.4M793.1 188.5L821.4 171.8M793.1 221.4L850.4 188.8M764.6 155.8L735.9 172.5M735.9 172.5L793.1 172.5M793.1 172.5L764.6 155.8M764.6 155.8L764.6 172.5M735.2 187.9C751.2 197.1 777.1 197.7 793.1 188.5M735.2 221.2C751.2 230.4 777.1 231 793.1 221.4" stroke="#5e5e5e" stroke-width="0.8" fill="none" stroke-linejoin="round"/><text x="785.9" y="254.2" font-size="7.6" text-anchor="middle" dominant-baseline="central" font-weight="700" fill="#1a1a1a" font-family="Liberation Sans" textLength="60" lengthAdjust="spacingAndGlyphs">VEDERE IZOMETRICA</text><path d="M843.5 394.2L847.3 399.4L855.2 387.5" stroke="#777" stroke-width="0.6" fill="none"/><path d="M675.6 402.4H864.3M675.6 402.4V448.2M675.6 413.5H864.3M793.2 424.1H864.3M793.2 432.2H864.3M675.6 437.1H793.2M675.6 442.8H864.3M736.4 402.4V413.5M793.2 402.4V442.8M832.5 402.4V413.5M832.5 432.2V442.8" stroke="#444" stroke-width="0.85" fill="none"/><text x="677" y="405.3" font-size="4.6" dominant-baseline="central" fill="#4a4a4a" font-family="Liberation Sans" textLength="37.8" lengthAdjust="spacingAndGlyphs">Author:  Emilian Popa</text><text x="677" y="410.4" font-size="4.6" dominant-baseline="central" fill="#4a4a4a" font-family="Liberation Sans" textLength="33.7" lengthAdjust="spacingAndGlyphs">Appr.:    Sorin Popa</text><text x="737.8" y="405.3" font-size="4.6" dominant-baseline="central" fill="#4a4a4a" font-family="Liberation Sans" textLength="23.3" lengthAdjust="spacingAndGlyphs">Legal owner:</text><text x="739.4" y="410.4" font-size="4.6" dominant-baseline="central" fill="#4a4a4a" font-family="Liberation Sans" textLength="41.2" lengthAdjust="spacingAndGlyphs">ASCENSORIX CRAIOVA</text><text x="794.4" y="405.3" font-size="4.6" dominant-baseline="central" fill="#4a4a4a" font-family="Liberation Sans" textLength="22.9" lengthAdjust="spacingAndGlyphs">Scale:  M 3:2</text><text x="794.4" y="410.4" font-size="4.6" dominant-baseline="central" fill="#4a4a4a" font-family="Liberation Sans" textLength="25.2" lengthAdjust="spacingAndGlyphs">Toler.: +/- 0.1</text><text x="833.3" y="405.3" font-size="4.6" dominant-baseline="central" fill="#4a4a4a" font-family="Liberation Sans" textLength="24.1" lengthAdjust="spacingAndGlyphs">Sheet:  1 of 1</text><text x="833.3" y="410.4" font-size="4.6" dominant-baseline="central" fill="#4a4a4a" font-family="Liberation Sans" textLength="19.5" lengthAdjust="spacingAndGlyphs">Size:     A3</text><text x="794.4" y="416.5" font-size="4.6" dominant-baseline="central" fill="#4a4a4a" font-family="Liberation Sans" textLength="49.2" lengthAdjust="spacingAndGlyphs">Part material:     100-01-014</text><text x="794.4" y="421.7" font-size="4.6" dominant-baseline="central" fill="#4a4a4a" font-family="Liberation Sans" textLength="47.6" lengthAdjust="spacingAndGlyphs">Part number:    100-01-014</text><text x="794.4" y="428.6" font-size="4.6" dominant-baseline="central" fill="#4a4a4a" font-family="Liberation Sans" textLength="46.9" lengthAdjust="spacingAndGlyphs">Drawing no.:  100-01-014</text><text x="794.4" y="435.5" font-size="4.6" dominant-baseline="central" fill="#4a4a4a" font-family="Liberation Sans" textLength="9.6" lengthAdjust="spacingAndGlyphs">Date:</text><text x="796.0" y="440.5" font-size="4.6" dominant-baseline="central" fill="#4a4a4a" font-family="Liberation Sans" textLength="20" lengthAdjust="spacingAndGlyphs">2022-12-18</text><text x="833.3" y="435.5" font-size="4.6" dominant-baseline="central" fill="#4a4a4a" font-family="Liberation Sans" textLength="16.1" lengthAdjust="spacingAndGlyphs">Revision:</text><text x="834.0" y="440.5" font-size="4.6" dominant-baseline="central" fill="#4a4a4a" font-family="Liberation Sans" textLength="10.8" lengthAdjust="spacingAndGlyphs">REV A</text><text x="677" y="417.2" font-size="4.6" dominant-baseline="central" fill="#4a4a4a" font-family="Liberation Sans" textLength="10.8" lengthAdjust="spacingAndGlyphs">TITLE:</text><text x="678.2" y="422.9" font-size="4.6" dominant-baseline="central" fill="#4a4a4a" font-family="Liberation Sans" textLength="42.4" lengthAdjust="spacingAndGlyphs">Exemplu 14/19.12.2022</text><text x="677" y="440.5" font-size="4.6" dominant-baseline="central" fill="#4a4a4a" font-family="Liberation Sans" textLength="75.7" lengthAdjust="spacingAndGlyphs">Document type:    Mechanical part drawing</text><text x="677" y="445.9" font-size="4.6" dominant-baseline="central" fill="#4a4a4a" font-family="Liberation Sans" textLength="173.5" lengthAdjust="spacingAndGlyphs">(c) DO NOT DUPLICATE THIS DRAWING TO THIRD PARTIES WITHOUT OWNER'S PERMISSION!</text><rect x="732" y="417.4" width="12.4" height="12.6" fill="#168a1e"/><rect x="738.2" y="417.8" width="6.2" height="6.2" fill="#1ee61e"/><rect x="748" y="414.8" width="6.3" height="6.4" fill="#168a1e"/><text x="748.4" y="426.4" font-size="10.4" dominant-baseline="central" fill="#157020" font-family="Liberation Sans" textLength="31" lengthAdjust="spacingAndGlyphs">EPOPA</text><text x="732.5" y="433.4" font-size="4" dominant-baseline="central" fill="#62b062" font-family="Liberation Sans" textLength="56" lengthAdjust="spacingAndGlyphs">Engineering and Drafting Services</text><path d="M662.2 445.6H659.2V433.3H667V436H662.2V438.3H664.2M662.2 440.6V445.6" stroke="#3a3a3a" stroke-width="0.75" fill="none"/><path d="M673.60 441.40L673.55 442.10L673.42 442.80L673.19 443.47L671.75 443.45L671.45 443.90L671.10 444.30L670.70 444.65L670.90 446.08L670.27 446.39L669.60 446.62L668.90 446.75L668.20 445.50L667.66 445.46L667.14 445.36L666.63 445.19L665.50 446.08L664.91 445.68L664.38 445.22L663.92 444.69L664.65 443.45L664.41 442.97L664.24 442.46L664.14 441.94L662.80 441.40L662.85 440.70L662.98 440.00L663.21 439.33L664.65 439.35L664.95 438.90L665.30 438.50L665.70 438.15L665.50 436.72L666.13 436.41L666.80 436.18L667.50 436.05L668.20 437.30L668.74 437.34L669.26 437.44L669.77 437.61L670.90 436.72L671.49 437.12L672.02 437.58L672.48 438.11L671.75 439.35L671.99 439.83L672.16 440.34L672.26 440.86z" fill="#fff" stroke="#3a3a3a" stroke-width="0.6"/><circle cx="668.2" cy="441.4" r="2" fill="none" stroke="#555" stroke-width="0.6"/></svg>
</body></html>
